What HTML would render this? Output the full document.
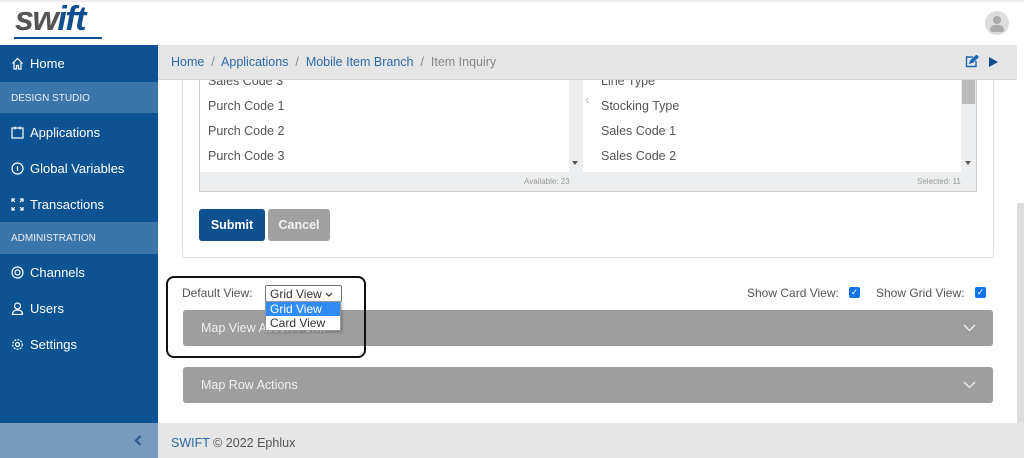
<!DOCTYPE html>
<html><head><style>
*{box-sizing:border-box;margin:0;padding:0}
body{width:1024px;height:458px;overflow:hidden;position:relative;background:#fff;font-family:"Liberation Sans",sans-serif;color:#555}
.a{position:absolute}
.side{left:0;top:45px;width:158px;height:378px;background:#0d5394}
.si{position:absolute;left:11px;color:#fff;font-size:13px}
.si svg{vertical-align:-2px;margin-right:6px}
.band{position:absolute;left:0;width:158px;height:31px;background:#3b76ab;color:#e8eef6;font-size:10px;padding:11px 0 0 11px}
.li{position:absolute;left:8px;font-size:12.5px;color:#555}
.acc{position:absolute;left:183px;width:810px;height:36px;background:#9e9e9e;border-radius:3px;color:#f0f0f0;font-size:12.5px;padding:11px 0 0 18px}
.acc svg{position:absolute;right:17px;top:14px}
</style></head><body>
<div class="a" style="left:0;top:0;width:1024px;height:2px;background:#eee"></div>
<div class="a" style="left:15px;top:0px;font-size:34px;font-weight:900;font-style:italic;color:#555;letter-spacing:-1.5px">sw<span style="color:#0d4f8f">ift</span></div>
<div class="a" style="left:14px;top:37px;width:88px;height:2px;background:#0d4f8f"></div>
<div class="a" style="left:985px;top:11px;width:24px;height:24px;border-radius:50%;background:#ddd"><div class="a" style="left:8px;top:5px;width:8px;height:8px;border-radius:50%;background:#aaa"></div><div class="a" style="left:5px;top:14px;width:14px;height:7px;border-radius:7px 7px 3px 3px;background:#aaa"></div></div>
<div class="a side">
<div class="si" style="top:11px"><svg width="13" height="13" viewBox="0 0 13 13" fill="none" stroke="#fff" stroke-width="1.2"><path d="M1.5 6.5L6.5 1.5L11.5 6.5M3 5v7h2.5V8.5h2V12H10V5"/></svg>Home</div>
<div class="band" style="top:37px">DESIGN STUDIO</div>
<div class="si" style="top:80px"><svg width="13" height="13" viewBox="0 0 13 13" fill="none" stroke="#fff" stroke-width="1.2"><rect x="1" y="2" width="11" height="10"/><path d="M4 0.5v3M9 0.5v3"/></svg>Applications</div>
<div class="si" style="top:116px"><svg width="13" height="13" viewBox="0 0 13 13" fill="none" stroke="#fff" stroke-width="1.2"><circle cx="6.5" cy="6.5" r="5.5"/><path d="M6.5 4v5"/></svg>Global Variables</div>
<div class="si" style="top:152px"><svg width="13" height="13" viewBox="0 0 13 13" fill="none" stroke="#fff" stroke-width="1.2"><path d="M1 4V1h3M9 1h3v3M12 9v3H9M4 12H1V9M1 1l3 3M12 1L9 4M12 12L9 9M1 12l3-3"/></svg>Transactions</div>
<div class="band" style="top:177px;height:32px">ADMINISTRATION</div>
<div class="si" style="top:220px"><svg width="13" height="13" viewBox="0 0 13 13" fill="none" stroke="#fff" stroke-width="1.2"><circle cx="6.5" cy="6.5" r="5.5"/><circle cx="6.5" cy="6.5" r="2.5"/></svg>Channels</div>
<div class="si" style="top:256px"><svg width="13" height="13" viewBox="0 0 13 13" fill="none" stroke="#fff" stroke-width="1.2"><circle cx="6.5" cy="4" r="3"/><path d="M1.5 12.5c0-3 2-4.5 5-4.5s5 1.5 5 4.5z"/></svg>Users</div>
<div class="si" style="top:292px"><svg width="13" height="13" viewBox="0 0 13 13" fill="none" stroke="#fff" stroke-width="1.2"><circle cx="6.5" cy="6.5" r="2"/><circle cx="6.5" cy="6.5" r="4.8" stroke-dasharray="2 1.2"/></svg>Settings</div>
</div>
<div class="a" style="left:0;top:423px;width:158px;height:35px;background:#7899c0"><svg class="a" style="left:134px;top:12px" width="8" height="11" viewBox="0 0 8 11"><path d="M6.5 1L2 5.5L6.5 10" fill="none" stroke="#2d5a8e" stroke-width="2.2"/></svg></div>
<div class="a" style="left:158px;top:423px;width:866px;height:35px;background:#e6e6e6;font-size:12.5px;padding:13px 0 0 13px;color:#555"><span style="color:#2d6aa5">SWIFT</span> © 2022 Ephlux</div>
<div class="a" style="left:1017px;top:203px;width:7px;height:220px;background:#ddd"></div>
<!-- panel -->
<div class="a" style="left:182px;top:70px;width:812px;height:188px;border:1px solid #ddd;border-radius:4px"></div>
<div class="a" style="left:199px;top:75px;width:778px;height:117px;border:1px solid #ccc;background:#eceeef"></div>
<div class="a" style="left:200px;top:76px;width:369px;height:96px;background:#fff"></div>
<div class="a" style="left:583px;top:76px;width:378px;height:96px;background:#fff"></div>
<div class="a" style="left:962px;top:80px;width:13px;height:24px;background:#bbb"></div>
<div class="a" style="left:572px;top:161px;border-top:4px solid #555;border-left:3px solid transparent;border-right:3px solid transparent"></div>
<div class="a" style="left:965px;top:161px;border-top:4px solid #555;border-left:3px solid transparent;border-right:3px solid transparent"></div>
<div class="a" style="left:585px;top:92px;font-size:13px;color:#bbb">‹</div>
<div class="li" style="left:208px;top:74px">Sales Code 3</div>
<div class="li" style="left:208px;top:99px">Purch Code 1</div>
<div class="li" style="left:208px;top:124px">Purch Code 2</div>
<div class="li" style="left:208px;top:149px">Purch Code 3</div>
<div class="li" style="left:601px;top:74px">Line Type</div>
<div class="li" style="left:601px;top:99px">Stocking Type</div>
<div class="li" style="left:601px;top:124px">Sales Code 1</div>
<div class="li" style="left:601px;top:149px">Sales Code 2</div>
<div class="a" style="left:524px;top:177px;font-size:8px;color:#999">Available: 23</div>
<div class="a" style="left:917px;top:177px;font-size:8px;color:#999">Selected: 11</div>
<div class="a" style="left:199px;top:209px;width:66px;height:32px;background:#0d4f8f;border-radius:3px;color:#fff;font-size:12.5px;font-weight:bold;text-align:center;line-height:32px">Submit</div>
<div class="a" style="left:268px;top:209px;width:62px;height:32px;background:#a0a0a0;border-radius:3px;color:#f2f2f2;font-size:12.5px;font-weight:bold;text-align:center;line-height:32px">Cancel</div>
<!-- breadcrumb -->
<div class="a" style="left:158px;top:45px;width:859px;height:35px;background:#e5e5e5;border-bottom:1px solid #d5d5d5;font-size:12.5px;padding:10px 0 0 13px;color:#2d6aa5">Home <span style="color:#888">&nbsp;/&nbsp;</span> Applications <span style="color:#888">&nbsp;/&nbsp;</span> Mobile Item Branch <span style="color:#888">&nbsp;/&nbsp; Item Inquiry</span></div>
<svg class="a" style="left:965px;top:55px" width="14" height="13" viewBox="0 0 14 13" fill="none" stroke="#1a66b0" stroke-width="1.4"><path d="M8 2H1.5v9.5H11V6"/><path d="M5 8l1-2.5L11.5 0.5l1.5 1.5L8 7z" fill="#1a66b0"/></svg>
<div class="a" style="left:989px;top:57px;width:0;height:0;border-left:9px solid #0d4f8f;border-top:5px solid transparent;border-bottom:5px solid transparent"></div>
<!-- bottom -->
<div class="acc" style="top:310px">Map View Action Form<svg width="13" height="8" viewBox="0 0 13 8"><path d="M1 1l5.5 5.5L12 1" fill="none" stroke="#eee" stroke-width="1.3"/></svg></div>
<div class="acc" style="top:367px">Map Row Actions<svg width="13" height="8" viewBox="0 0 13 8"><path d="M1 1l5.5 5.5L12 1" fill="none" stroke="#eee" stroke-width="1.3"/></svg></div>
<div class="a" style="left:182px;top:286px;font-size:12px">Default View:</div>
<div class="a" style="left:265px;top:285px;width:77px;height:17px;border:1px solid #777;border-radius:2px;background:#fff;font-size:12px;color:#333;padding:1px 0 0 4px">Grid View <svg width="8" height="6" viewBox="0 0 8 6"><path d="M1 1l3 3 3-3" fill="none" stroke="#333" stroke-width="1.2"/></svg></div>
<div class="a" style="left:265px;top:301px;width:76px;height:30px;border:1px solid #999;background:#fff;box-shadow:1px 1px 3px rgba(0,0,0,.3);font-size:12px">
<div style="background:#2f8cf5;color:#fff;height:14px;padding-left:4px;line-height:14px">Grid View</div>
<div style="color:#333;height:14px;padding-left:4px;line-height:14px">Card View</div></div>
<div class="a" style="left:166px;top:276px;width:200px;height:82px;border:2px solid #111;border-radius:8px"></div>
<div class="a" style="left:747px;top:286px;font-size:12px">Show Card View:</div>
<div class="a" style="left:849px;top:287px;width:11px;height:11px;background:#1473e6;border-radius:2px;color:#fff;font-size:9px;line-height:11px;text-align:center">✓</div>
<div class="a" style="left:876px;top:286px;font-size:12px">Show Grid View:</div>
<div class="a" style="left:975px;top:287px;width:11px;height:11px;background:#1473e6;border-radius:2px;color:#fff;font-size:9px;line-height:11px;text-align:center">✓</div>
</body></html>
